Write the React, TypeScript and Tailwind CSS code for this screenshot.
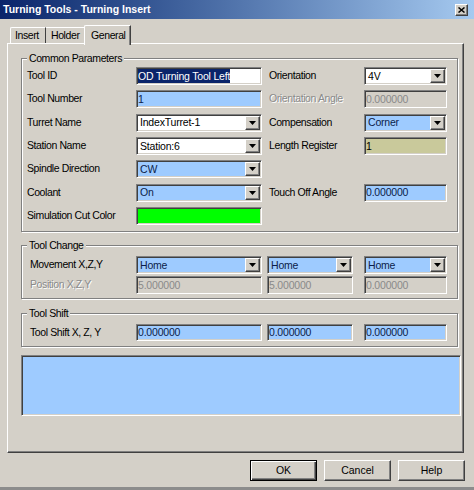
import React from 'react';

const sunken =
  'border border-t-[#808080] border-l-[#808080] border-b-white border-r-white shadow-[inset_1px_1px_0_#404040,inset_-1px_-1px_0_#d4d0c8]';
const raised =
  'bg-[#d4d0c8] border border-t-white border-l-white border-r-[#404040] border-b-[#404040] shadow-[inset_-1px_-1px_0_#808080]';
const BLUE = 'bg-[#9ecbff]';

interface FieldProps {
  w: string;
  value: string;
  bg?: string;
  combo?: boolean;
  disabled?: boolean;
  selected?: boolean;
  h?: string;
}

// 入力欄 / コンボボックス
const Field: React.FC<FieldProps> = ({ w, value, bg = 'bg-white', combo, disabled, selected, h = 'h-[18px]' }) => (
  <div className={`${w} ${h} ${sunken} ${disabled ? 'bg-[#d4d0c8]' : bg} flex p-[1px]`}>
    <div
      className={`flex-1 flex items-center overflow-hidden whitespace-nowrap text-[10.5px] tracking-[-0.2px] leading-none ${
        combo ? 'pl-[2px]' : 'pl-0'
      } ${disabled ? 'text-[#8a8a8a]' : bg === BLUE ? 'text-[#0c1d4a]' : 'text-black'}`}
    >
      {selected ? <span className="bg-[#0a246a] text-white py-[2px]">{value}</span> : value}
    </div>
    {combo && (
      <div className={`w-[15px] ${raised} flex items-center justify-center`}>
        <svg width="7" height="4" viewBox="0 0 7 4">
          <path d="M0 0h7L3.5 4z" fill="#000" />
        </svg>
      </div>
    )}
  </div>
);

const Label: React.FC<{ text: string; disabled?: boolean; className?: string }> = ({ text, disabled, className = '' }) => (
  <div
    className={`flex items-center whitespace-nowrap text-[10.5px] tracking-[-0.4px] ${
      disabled ? 'text-[#8a8a8a] [text-shadow:1px_1px_0_#fff]' : 'text-black'
    } ${className}`}
  >
    {text}
  </div>
);

const Group: React.FC<{ title: string; className: string; children: React.ReactNode }> = ({ title, className, children }) => (
  <div className={`relative w-[437px] border border-[#808080] shadow-[1px_1px_0_#fff,inset_1px_1px_0_#fff] ${className}`}>
    <div className="absolute -top-[7px] left-[5px] px-[2px] bg-[#d4d0c8] text-[10.5px] leading-[12px] tracking-[-0.4px] text-black">
      {title}
    </div>
    {children}
  </div>
);

const Button: React.FC<{ text: string; def?: boolean }> = ({ text, def }) => (
  <div
    className={`w-[67px] h-[21px] flex items-center justify-center text-[10.5px] text-black ${
      def
        ? 'bg-[#d4d0c8] border border-black shadow-[inset_1px_1px_0_#fff,inset_-1px_-1px_0_#404040,inset_-2px_-2px_0_#808080]'
        : raised
    }`}
  >
    {text}
  </div>
);

const App: React.FC = () => {
  return (
    <div className="w-[474px] h-[490px] bg-[#d4d0c8] flex flex-col overflow-hidden font-['Liberation_Sans',Arial,sans-serif] select-none">
      {/* タイトルバー */}
      <div className="h-[19px] flex items-center justify-between pl-[3px] pr-[6px] bg-linear-to-r from-[#0a246a] to-[#a6caf0]">
        <span className="text-white font-bold text-[10.5px] leading-none">Turning Tools - Turning Insert</span>
        <div className={`w-[13px] h-[12px] ${raised} flex items-center justify-center`}>
          <svg width="7" height="6" viewBox="0 0 7 6">
            <path d="M0.5 0.5L6.5 5.5M6.5 0.5L0.5 5.5" stroke="#000" strokeWidth="1.5" />
          </svg>
        </div>
      </div>

      <div className="pl-[7px] pt-[6px]">
        {/* タブ */}
        <div className="h-[18px] flex items-end pl-[3px]">
          <div className="w-[36px] h-[16px] border-t border-l border-white border-r border-r-[#404040] rounded-tl-[2px] flex items-center pl-[4px] text-[10.5px] tracking-[-0.4px]">
            Insert
          </div>
          <div className="w-[39px] h-[16px] border-t border-white flex items-center pl-[5px] text-[10.5px] tracking-[-0.4px]">
            Holder
          </div>
          <div className="relative z-10 w-[47px] h-[20px] -mb-[2px] -ml-[1px] bg-[#d4d0c8] border-t border-l border-white border-r border-r-[#404040] shadow-[inset_-1px_0_0_#808080] rounded-tl-[2px] flex items-start pt-[2px] pl-[6px] text-[10.5px] tracking-[-0.4px]">
            General
          </div>
        </div>

        {/* タブパネル */}
        <div className="w-[457px] h-[410px] border border-t-white border-l-white border-r-[#404040] border-b-[#404040] shadow-[inset_-1px_-1px_0_#808080] pl-[13px] pt-[14px]">
          <Group title="Common Parameters" className="h-[174px] pt-[8px] pl-[5px]">
            <div className="grid grid-cols-[109px_133px_95px_83px] auto-rows-[18px] gap-y-[5.33px]">
              <Label text="Tool ID" />
              <Field w="w-[126px]" value="OD Turning Tool Left" selected />
              <Label text="Orientation" />
              <Field w="w-[83px]" value="4V" combo />

              <Label text="Tool Number" />
              <Field w="w-[126px]" value="1" bg={BLUE} />
              <Label text="Orientation Angle" disabled />
              <Field w="w-[83px]" value="0.000000" disabled />

              <Label text="Turret Name" />
              <Field w="w-[126px]" value="IndexTurret-1" combo />
              <Label text="Compensation" />
              <Field w="w-[83px]" value="Corner" bg={BLUE} combo />

              <Label text="Station Name" />
              <Field w="w-[126px]" value="Station:6" combo />
              <Label text="Length Register" />
              <Field w="w-[83px]" value="1" bg="bg-[#c9c99b]" />

              <Label text="Spindle Direction" />
              <Field w="w-[126px]" value="CW" bg={BLUE} combo />
              <div />
              <div />

              <Label text="Coolant" />
              <Field w="w-[126px]" value="On" bg={BLUE} combo />
              <Label text="Touch Off Angle" />
              <Field w="w-[83px]" value="0.000000" bg={BLUE} />

              <Label text="Simulation Cut Color" />
              <Field w="w-[126px]" value="" bg="bg-[#00ff00]" />
              <div />
              <div />
            </div>
          </Group>

          <Group title="Tool Change" className="mt-[13px] h-[54px] pt-[10px] pl-[8px]">
            <div className="grid grid-cols-[106px_131px_97px_83px] auto-rows-[18px] gap-y-[2px]">
              <Label text="Movement X,Z,Y" />
              <Field w="w-[126px]" value="Home" bg={BLUE} combo />
              <Field w="w-[86px]" value="Home" bg={BLUE} combo />
              <Field w="w-[83px]" value="Home" bg={BLUE} combo />

              <Label text="Position X,Z,Y" disabled />
              <Field w="w-[126px]" value="5.000000" disabled />
              <Field w="w-[86px]" value="5.000000" disabled />
              <Field w="w-[83px]" value="0.000000" disabled />
            </div>
          </Group>

          <Group title="Tool Shift" className="mt-[14px] h-[34px] pt-[10px] pl-[8px]">
            <div className="grid grid-cols-[106px_131px_97px_83px] auto-rows-[17px]">
              <Label text="Tool Shift X, Z, Y" />
              <Field w="w-[126px]" h="h-[17px]" value="0.000000" bg={BLUE} />
              <Field w="w-[86px]" h="h-[17px]" value="0.000000" bg={BLUE} />
              <Field w="w-[83px]" h="h-[17px]" value="0.000000" bg={BLUE} />
            </div>
          </Group>

          {/* メモ欄 */}
          <div className={`mt-[8px] w-[440px] h-[61px] ${sunken} ${BLUE}`} />
        </div>
      </div>

      {/* ボタン */}
      <div className="mt-[7px] flex justify-end gap-[7px] pr-[9px]">
        <Button text="OK" def />
        <Button text="Cancel" />
        <Button text="Help" />
      </div>

      <div className="mt-auto h-[3px] bg-[#8c8c8c]" />
    </div>
  );
};

export default App;
